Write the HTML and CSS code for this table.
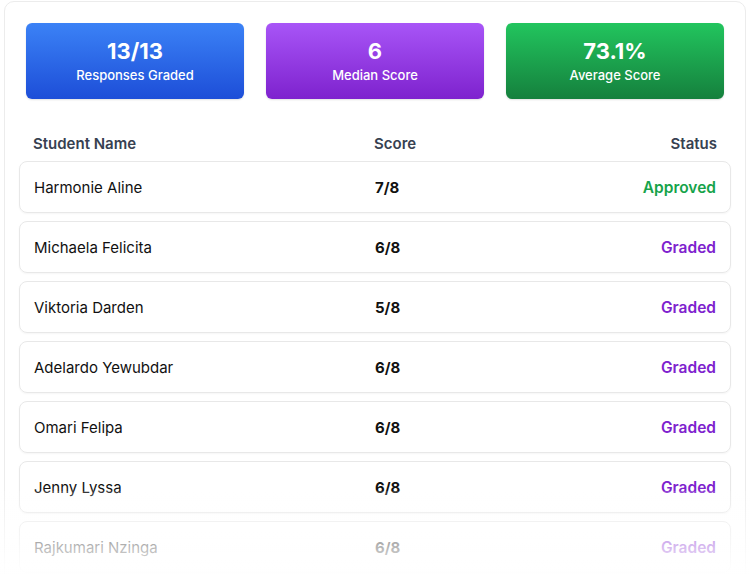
FILE: index.html
```html
<!DOCTYPE html>
<html lang="en">
<head>
<meta charset="utf-8">
<title>Grading Summary</title>
<link rel="stylesheet" href="styles.css">
</head>
<body>
<div class="panel">
  <div class="stats">
    <div class="stat stat-blue">
      <div class="stat-value">13/13</div>
      <div class="stat-label">Responses Graded</div>
    </div>
    <div class="stat stat-purple">
      <div class="stat-value">6</div>
      <div class="stat-label">Median Score</div>
    </div>
    <div class="stat stat-green">
      <div class="stat-value">73.1%</div>
      <div class="stat-label">Average Score</div>
    </div>
  </div>

  <div class="table">
    <div class="thead">
      <span class="col-name">Student Name</span>
      <span class="col-score">Score</span>
      <span class="col-status">Status</span>
    </div>
    <div class="row">
      <span class="col-name">Harmonie Aline</span>
      <span class="col-score score">7/8</span>
      <span class="col-status status approved">Approved</span>
    </div>
    <div class="row">
      <span class="col-name">Michaela Felicita</span>
      <span class="col-score score">6/8</span>
      <span class="col-status status graded">Graded</span>
    </div>
    <div class="row">
      <span class="col-name">Viktoria Darden</span>
      <span class="col-score score">5/8</span>
      <span class="col-status status graded">Graded</span>
    </div>
    <div class="row">
      <span class="col-name">Adelardo Yewubdar</span>
      <span class="col-score score">6/8</span>
      <span class="col-status status graded">Graded</span>
    </div>
    <div class="row">
      <span class="col-name">Omari Felipa</span>
      <span class="col-score score">6/8</span>
      <span class="col-status status graded">Graded</span>
    </div>
    <div class="row">
      <span class="col-name">Jenny Lyssa</span>
      <span class="col-score score">6/8</span>
      <span class="col-status status graded">Graded</span>
    </div>
    <div class="row">
      <span class="col-name">Rajkumari Nzinga</span>
      <span class="col-score score">6/8</span>
      <span class="col-status status graded">Graded</span>
    </div>
  </div>
</div>
<div class="fade"></div>
</body>
</html>
```

FILE: styles.css
```css
* { box-sizing: border-box; }
html, body {
  margin: 0;
  padding: 0;
  background: #ffffff;
  height: 100%;
  overflow: hidden;
}
body {
  font-family: Inter, "Noto Sans", sans-serif;
  color: #111111;
  padding: 1px 4px 0 4px;
}
.panel {
  border: 1px solid #ececec;
  border-radius: 10px;
  padding: 21px 14px 16px 14px;
  background: #fff;
}
.stats {
  display: grid;
  grid-template-columns: repeat(3, 1fr);
  gap: 22px;
  margin: 0 7px;
}
.stat {
  height: 76px;
  border-radius: 6px;
  color: #fff;
  display: flex;
  flex-direction: column;
  align-items: center;
  justify-content: center;
  box-shadow: 0 1px 2px rgba(0,0,0,0.12);
}
.stat-blue { background: linear-gradient(180deg, #3b82f6 0%, #1d4ed8 100%); }
.stat-purple { background: linear-gradient(180deg, #a855f7 0%, #7e22ce 100%); }
.stat-green { background: linear-gradient(180deg, #22c55e 0%, #15803d 100%); }
.stat-value {
  font-size: 22px;
  font-weight: 700;
  line-height: 28px;
  margin-top: -1px;
}
.stat-label {
  font-size: 13px;
  font-weight: 500;
  line-height: 18px;
  margin-top: 1px;
}
.table {
  margin-top: 34px;
  display: flex;
  flex-direction: column;
  gap: 8px;
}
.thead, .row {
  display: grid;
  grid-template-columns: 341px 1fr auto;
  align-items: center;
  padding: 0 14px;
}
.thead {
  height: 20px;
  margin-bottom: 0;
  font-size: 15px;
  font-weight: 600;
  color: #374151;
}
.row {
  height: 52px;
  border: 1px solid #e8e8e8;
  border-radius: 8px;
  font-size: 15px;
  box-shadow: 0 1px 2px rgba(0,0,0,0.04);
}
.col-status { text-align: right; }
.score { font-weight: 700; }
.status { font-weight: 600; font-size: 15.5px; }
.approved { color: #16a34a; }
.graded { color: #7e22ce; }
.fade {
  position: fixed;
  left: 0;
  right: 0;
  bottom: 0;
  height: 88px;
  background: linear-gradient(180deg, rgba(255,255,255,0.15) 0%, rgba(255,255,255,0.68) 62%, #ffffff 100%);
  pointer-events: none;
}
```
